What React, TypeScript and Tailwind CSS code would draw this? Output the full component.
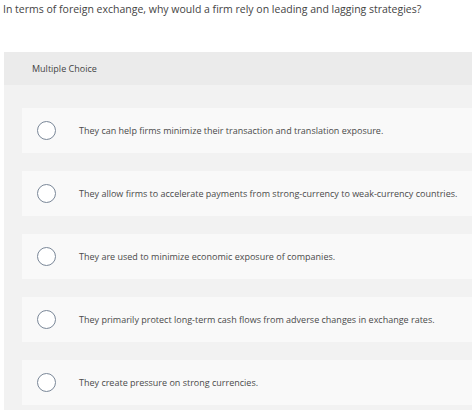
const options = [
  "They can help firms minimize their transaction and translation exposure.",
  "They allow firms to accelerate payments from strong-currency to weak-currency countries.",
  "They are used to minimize economic exposure of companies.",
  "They primarily protect long-term cash flows from adverse changes in exchange rates.",
  "They create pressure on strong currencies.",
];

export default function App() {
  return (
    <main className="min-h-screen bg-white font-['Open_Sans','Liberation_Sans',sans-serif] text-[#333] [font-variant-ligatures:none]">
      <p className="px-[3px] pt-px text-[10.5px] leading-[17px] text-[#444]">
        In terms of foreign exchange, why would a firm rely on leading and lagging strategies?
      </p>
      <section className="mt-[34px] ml-[4px] mr-[2px] bg-[#f2f2f2]">
        <div className="flex h-[33px] items-center bg-[#ebebeb] pl-[28px] text-[9px] text-[#444]">
          Multiple Choice
        </div>
        <div className="flex flex-col gap-[18px] pt-[23px] pb-[5px] pl-[18px]">
          {options.map((text) => (
            <label key={text} className="flex h-[45px] items-center bg-[#f9f9f9] pl-[15px]">
              <span className="h-[19px] w-[19px] shrink-0 rounded-full border border-[#7a8798] bg-white" />
              <span className="ml-[23px] text-[9px] text-[#4a4a4a]">{text}</span>
            </label>
          ))}
        </div>
      </section>
    </main>
  );
}
